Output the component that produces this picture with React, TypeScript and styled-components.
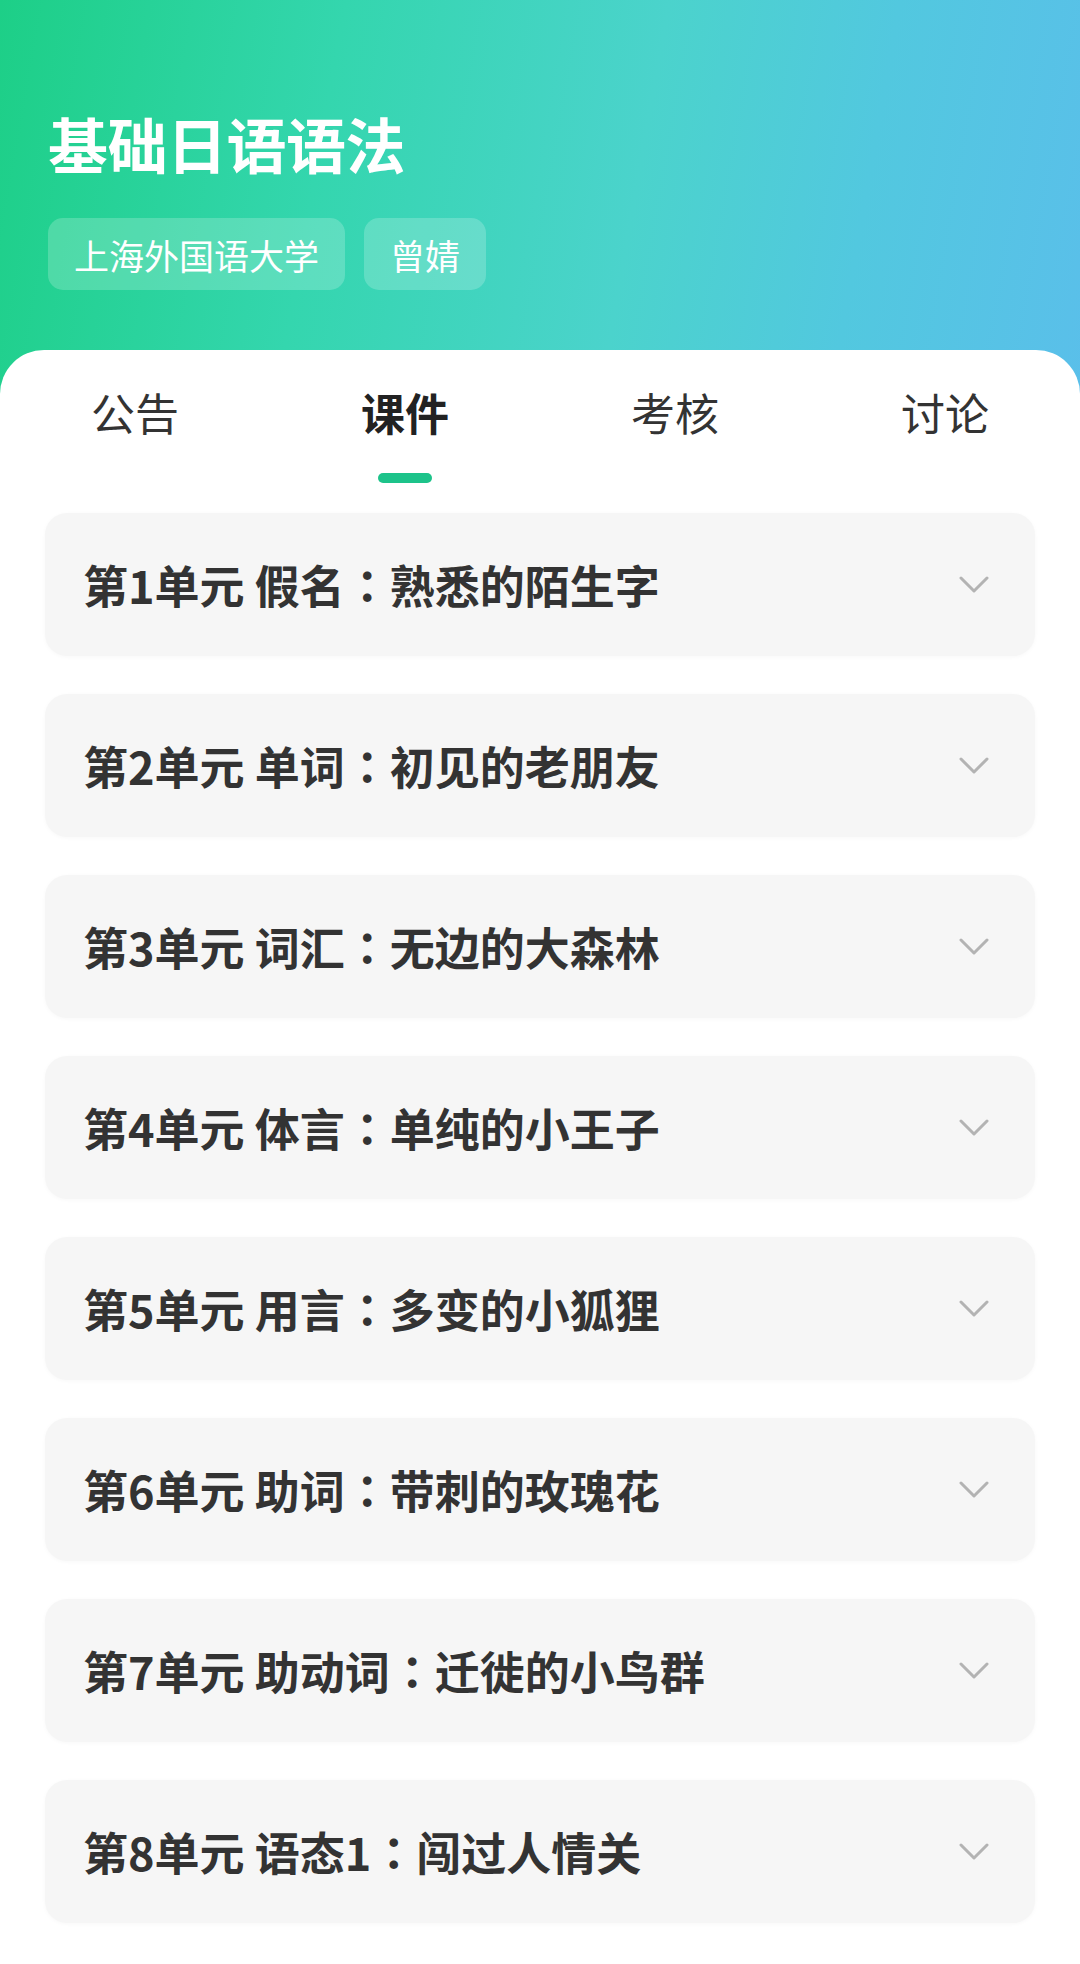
import styled, { createGlobalStyle } from "styled-components";

const GlobalStyle = createGlobalStyle`
  html, body {
    margin: 0;
    padding: 0;
    background: #ffffff;
  }
  body {
    font-family: "Noto Sans CJK SC", "Noto Sans", Roboto, sans-serif;
  }
`;

const Page = styled.div`
  width: 1080px;
  min-height: 1964px;
  overflow: hidden;
  background:
    linear-gradient(100deg, #1dcf87 0%, #34d6ae 30%, #4bd3cc 58%, #52c8df 78%, #5abfea 100%) top / 100% 420px no-repeat,
    #ffffff;
`;

const Header = styled.header`
  height: 350px;
  box-sizing: border-box;
  padding: 110px 48px 0;
  display: flex;
  flex-direction: column;
  gap: 42px;
`;

const Title = styled.h1`
  margin: 0;
  font-size: 60px;
  line-height: 66px;
  font-weight: 700;
  color: #ffffff;
  letter-spacing: -0.5px;
`;

const TagRow = styled.div`
  display: flex;
  gap: 19px;
`;

const Tag = styled.span`
  height: 72px;
  display: inline-flex;
  align-items: center;
  padding: 0 26px;
  border-radius: 15px;
  background: rgba(255, 255, 255, 0.2);
  color: #ffffff;
  font-size: 35px;
  font-weight: 400;
`;

const Panel = styled.main`
  background: #ffffff;
  border-radius: 44px 44px 0 0;
  padding: 0 45px 40px;
`;

const Tabs = styled.nav`
  display: grid;
  grid-template-columns: repeat(4, 270px);
  margin: 0 -45px;
  padding-top: 40px;
`;

const TabItem = styled.div<{ $active?: boolean }>`
  display: flex;
  flex-direction: column;
  align-items: center;
  font-size: 44px;
  line-height: 44px;
  font-weight: ${(p) => (p.$active ? 700 : 400)};
  color: ${(p) => (p.$active ? "#222222" : "#333333")};

  &::after {
    content: "";
    margin-top: 39px;
    width: 54px;
    height: 10px;
    border-radius: 5px;
    background: ${(p) => (p.$active ? "#1dc38a" : "transparent")};
  }
`;

const UnitList = styled.div`
  margin-top: 30px;
  display: flex;
  flex-direction: column;
  gap: 38px;
`;

const UnitCard = styled.div`
  height: 143px;
  box-sizing: border-box;
  padding: 0 46px 0 38px;
  border-radius: 22px;
  background: #f6f6f6;
  box-shadow: 0 1px 4px rgba(0, 0, 0, 0.03);
  display: flex;
  align-items: center;
  justify-content: space-between;
`;

const UnitTitle = styled.span`
  font-size: 45px;
  font-weight: 700;
  color: #333333;
  white-space: nowrap;
`;

// the full-width colon sits centred in its cell in the reference, as in the JP face
const Colon = styled.span`
  font-family: "Noto Sans CJK JP", "Noto Sans CJK SC", sans-serif;
`;

const Chevron = () => (
  <svg width="30" height="18" viewBox="0 0 30 18" fill="none">
    <polyline
      points="2,2 15,15 28,2"
      stroke="#b3b3b3"
      strokeWidth="3"
      strokeLinecap="round"
      strokeLinejoin="round"
    />
  </svg>
);

const tabs = ["公告", "课件", "考核", "讨论"];

const units = [
  ["第1单元 假名", "熟悉的陌生字"],
  ["第2单元 单词", "初见的老朋友"],
  ["第3单元 词汇", "无边的大森林"],
  ["第4单元 体言", "单纯的小王子"],
  ["第5单元 用言", "多变的小狐狸"],
  ["第6单元 助词", "带刺的玫瑰花"],
  ["第7单元 助动词", "迁徙的小鸟群"],
  ["第8单元 语态1", "闯过人情关"],
];

export default function App() {
  return (
    <Page>
      <GlobalStyle />
      <Header>
        <Title>基础日语语法</Title>
        <TagRow>
          <Tag>上海外国语大学</Tag>
          <Tag>曾婧</Tag>
        </TagRow>
      </Header>
      <Panel>
        <Tabs>
          {tabs.map((t) => (
            <TabItem key={t} $active={t === "课件"}>
              {t}
            </TabItem>
          ))}
        </Tabs>
        <UnitList>
          {units.map(([head, tail]) => (
            <UnitCard key={head}>
              <UnitTitle>
                {head}
                <Colon>：</Colon>
                {tail}
              </UnitTitle>
              <Chevron />
            </UnitCard>
          ))}
        </UnitList>
      </Panel>
    </Page>
  );
}
